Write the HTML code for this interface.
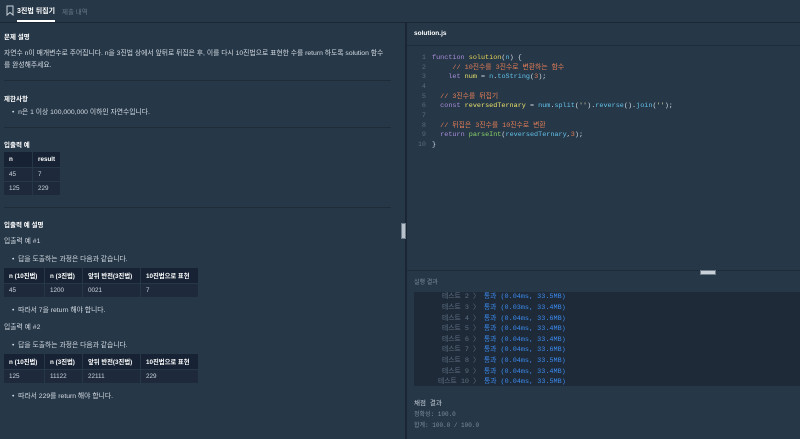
<!DOCTYPE html>
<html><head><meta charset="utf-8"><style>
*{margin:0;padding:0;box-sizing:border-box}
body{width:800px;height:439px;overflow:hidden;background:#263747;font-family:"Liberation Sans","Noto Sans CJK KR",sans-serif;color:#d4dbe3;position:relative;font-size:6.8px}
.a{position:absolute;white-space:nowrap}
.t{font-weight:bold;color:#fff;font-size:6.5px}
.hr{position:absolute;height:1px;background:#1e2b39}
table{position:absolute;border-collapse:collapse;font-size:6.3px;table-layout:fixed}
td,th{text-align:left;padding:0 0 0 5px;border:1px solid #263747;white-space:nowrap;overflow:hidden}
th{background:#172334;color:#fff;height:16px;font-weight:bold}
td{background:#1e2a3b;color:#cdd5de;height:14px}
.code{position:absolute;left:404px;font-family:"Liberation Mono","Noto Sans CJK KR",monospace;font-size:6.8px;line-height:9.65px;white-space:pre}
.ln{color:#596b7d;display:inline-block;width:22px;text-align:right;margin-right:6px}
.k{color:#a98ddb}.f{color:#e6d55a}.c{color:#e37e57}.p{color:#63c1e9}.v{color:#e8e16a}.g{color:#8ad46a}.n{color:#e0d7a8}
.out{position:absolute;left:414px;top:292px;width:386px;height:94px;background:#1e2a38;font-family:"Liberation Mono","Noto Sans CJK KR",monospace;font-size:6.8px;color:#5d6f82}
.out div{position:absolute;white-space:pre}
.b{color:#3c8bf0}
</style></head><body>
<div class="hr" style="left:0;top:22px;width:800px;background:#1a2634"></div>
<svg class="a" style="left:6px;top:5px" width="8" height="11" viewBox="0 0 8 11"><path d="M1 1h6v9L4 7.5 1 10z" fill="none" stroke="#c9d1da" stroke-width="1"/></svg>
<div class="a" style="left:17px;top:6px;color:#fff;font-size:7px;font-weight:bold">3진법 뒤집기</div>
<div class="a" style="left:17px;top:20px;width:38px;height:2px;background:#fff"></div>
<div class="a" style="left:62px;top:6px;color:#6a7b8c;font-size:6.5px">제출 내역</div>
<div class="a" style="left:405px;top:22px;width:2px;height:417px;background:#1a2634"></div>

<div class="a t" style="left:4px;top:31px">문제 설명</div>
<div class="a" style="left:4px;top:47px">자연수 n이 매개변수로 주어집니다. n을 3진법 상에서 앞뒤로 뒤집은 후, 이를 다시 10진법으로 표현한 수를 return 하도록 solution 함수</div>
<div class="a" style="left:4px;top:59px">를 완성해주세요.</div>
<div class="hr" style="left:4px;top:80px;width:387px"></div>
<div class="a t" style="left:4px;top:93px">제한사항</div>
<div class="a" style="left:12px;top:106px">•&nbsp; n은 1 이상 100,000,000 이하인 자연수입니다.</div>
<div class="hr" style="left:4px;top:127px;width:387px"></div>
<div class="a t" style="left:4px;top:139px">입출력 예</div>
<table style="left:3px;top:151px"><tr><th style="width:29px">n</th><th style="width:28px">result</th></tr><tr><td>45</td><td>7</td></tr><tr><td>125</td><td>229</td></tr></table>
<div class="hr" style="left:4px;top:207px;width:387px"></div>
<div class="a t" style="left:4px;top:219px">입출력 예 설명</div>
<div class="a" style="left:4px;top:235px">입출력 예 #1</div>
<div class="a" style="left:12px;top:253px">•&nbsp; 답을 도출하는 과정은 다음과 같습니다.</div>
<table style="left:3px;top:267px"><tr><th style="width:41px">n (10진법)</th><th style="width:38px">n (3진법)</th><th style="width:58px">앞뒤 반전(3진법)</th><th style="width:58px">10진법으로 표현</th></tr><tr><td>45</td><td>1200</td><td>0021</td><td>7</td></tr></table>
<div class="a" style="left:12px;top:304px">•&nbsp; 따라서 7을 return 해야 합니다.</div>
<div class="a" style="left:4px;top:321px">입출력 예 #2</div>
<div class="a" style="left:12px;top:339px">•&nbsp; 답을 도출하는 과정은 다음과 같습니다.</div>
<table style="left:3px;top:353px"><tr><th style="width:41px">n (10진법)</th><th style="width:38px">n (3진법)</th><th style="width:58px">앞뒤 반전(3진법)</th><th style="width:58px">10진법으로 표현</th></tr><tr><td>125</td><td>11122</td><td>22111</td><td>229</td></tr></table>
<div class="a" style="left:12px;top:390px">•&nbsp; 따라서 229를 return 해야 합니다.</div>
<div class="a" style="left:401px;top:223px;width:5px;height:16px;background:#b8c2cc;border:1px solid #6f7d8a"></div>

<div class="a t" style="left:414px;top:30px;font-size:6.5px">solution.js</div>
<div class="hr" style="left:407px;top:45px;width:393px;background:#1e2b39"></div>
<div class="code" style="top:54px"><span class="ln">1</span><span class="k">function</span> <span class="f">solution</span>(<span class="p">n</span>) {
<span class="ln">2</span>     <span class="c">// 10진수를 3진수로 변환하는 함수</span>
<span class="ln">3</span>    <span class="k">let</span> <span class="v">num</span> = <span class="p">n</span>.<span class="p">toString</span>(<span class="c">3</span>);
<span class="ln">4</span>
<span class="ln">5</span>  <span class="c">// 3진수를 뒤집기</span>
<span class="ln">6</span>  <span class="k">const</span> <span class="v">reversedTernary</span> = <span class="p">num</span>.<span class="p">split</span>(<span class="n">''</span>).<span class="p">reverse</span>().<span class="p">join</span>(<span class="n">''</span>);
<span class="ln">7</span>
<span class="ln">8</span>  <span class="c">// 뒤집은 3진수를 10진수로 변환</span>
<span class="ln">9</span>  <span class="k">return</span> <span class="g">parseInt</span>(<span class="p">reversedTernary</span>,<span class="c">3</span>);
<span class="ln">10</span>}</div>

<div class="hr" style="left:407px;top:270px;width:393px;background:#1e2b39"></div>
<div class="a" style="left:700px;top:270px;width:16px;height:5px;background:#c8d0d8;border:1px solid #6f7d8a"></div>
<div class="a" style="left:414px;top:277px;color:#7d8d9c;font-size:6px">실행 결과</div>
<div class="out">
<div style="left:28px;top:-2px">테스트 2 〉 <span class="b">통과 (0.04ms, 33.5MB)</span></div>
<div style="left:28px;top:9px">테스트 3 〉 <span class="b">통과 (0.03ms, 33.4MB)</span></div>
<div style="left:28px;top:19.5px">테스트 4 〉 <span class="b">통과 (0.04ms, 33.6MB)</span></div>
<div style="left:28px;top:30px">테스트 5 〉 <span class="b">통과 (0.04ms, 33.4MB)</span></div>
<div style="left:28px;top:40.5px">테스트 6 〉 <span class="b">통과 (0.04ms, 33.4MB)</span></div>
<div style="left:28px;top:51px">테스트 7 〉 <span class="b">통과 (0.04ms, 33.6MB)</span></div>
<div style="left:28px;top:62px">테스트 8 〉 <span class="b">통과 (0.04ms, 33.5MB)</span></div>
<div style="left:28px;top:72.5px">테스트 9 〉 <span class="b">통과 (0.04ms, 33.4MB)</span></div>
<div style="left:24px;top:83px">테스트 10 〉 <span class="b">통과 (0.04ms, 33.5MB)</span></div>
</div>
<div class="a" style="left:414px;top:397px;color:#c9d1da;font-size:6.5px;font-family:'Liberation Mono','Noto Sans CJK KR',monospace">채점 결과</div>
<div class="a" style="left:414px;top:409px;color:#7d8d9c;font-size:6px;font-family:'Liberation Mono','Noto Sans CJK KR',monospace">정확성: 100.0</div>
<div class="a" style="left:414px;top:420px;color:#7d8d9c;font-size:6px;font-family:'Liberation Mono','Noto Sans CJK KR',monospace">합계: 100.0 / 100.0</div>
</body></html>
